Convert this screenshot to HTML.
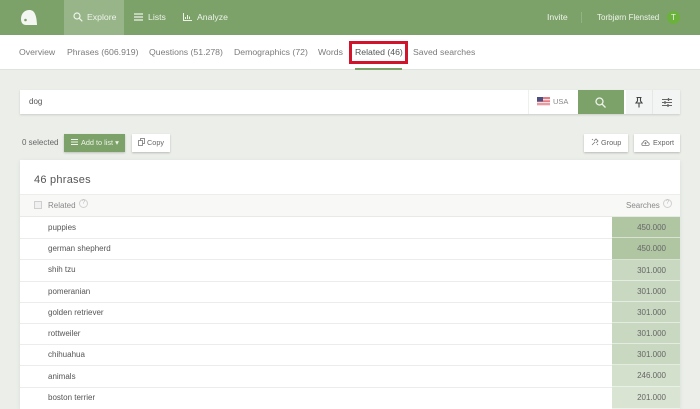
<!DOCTYPE html>
<html>
<head>
<meta charset="utf-8">
<style>
html,body{margin:0;padding:0}
body{width:700px;height:409px;overflow:hidden;background:#ebeee9;font-family:"Liberation Sans",sans-serif;position:relative;color:#555}
.a{position:absolute;white-space:nowrap}
#top{left:0;top:0;width:700px;height:35px;background:#7ca26a}
.n{color:#eef3ea;font-size:8.700px;top:12px;line-height:11px}
#sub{left:0;top:35px;width:700px;height:34px;background:#fff;border-bottom:1px solid #dfe3dd;box-sizing:content-box}
.t{color:#7b7b7b;font-size:8.700px;top:47px;line-height:11px}
.btn{background:#fff;box-shadow:0 1px 2px rgba(0,0,0,.22);height:18px;top:134px;font-size:7.300px;line-height:17px;color:#666;text-align:left;box-sizing:border-box}
.row{left:20px;width:660px;height:21px;border-top:1px solid #ebedea;box-sizing:border-box}
.ph{left:48px;font-size:8px;color:#555;line-height:10px}
.v{left:612px;width:68px;height:20px;line-height:20px;font-size:8px;color:#666;text-align:right;padding-right:14px;box-sizing:border-box;border-bottom:1px solid rgba(255,255,255,.5)}
.q{width:7px;height:7px;border:1px solid #d0d0d0;border-radius:50%;font-size:6px;line-height:7px;text-align:center;color:#bbb}
svg{position:absolute;overflow:visible}
</style>
</head>
<body>
<div class="a" id="top"></div>
<div class="a" style="left:64px;top:0;width:60px;height:35px;background:#97b588"></div>
<svg style="left:20px;top:9px" width="18" height="16" viewBox="0 0 18 16"><path d="M1 10C1 4.500 4.500 1 9.500 1c4.500 0 7 4 7.500 15H6C3 16 1 14 1 10z" fill="#f4f6f2"/><circle cx="5.500" cy="11" r="1.300" fill="#7ca26a"/></svg>
<svg style="left:73px;top:12px" width="10" height="10" viewBox="0 0 10 10" fill="none" stroke="#eef3ea" stroke-width="1.200"><circle cx="4" cy="4" r="3"/><path d="M6.300 6.300L9.300 9.300"/></svg>
<div class="a n" style="left:87px">Explore</div>
<svg style="left:134px;top:13px" width="9" height="8" viewBox="0 0 9 8" fill="none" stroke="#eef3ea" stroke-width="1.200"><path d="M0 1h9M0 4h9M0 7h9"/></svg>
<div class="a n" style="left:148px">Lists</div>
<svg style="left:183px;top:13px" width="9" height="8" viewBox="0 0 9 8" fill="none" stroke="#eef3ea" stroke-width="1"><path d="M.5 0v7.500H9M2.500 6V4M4.500 6V2M6.500 6V3.500"/></svg>
<div class="a n" style="left:197px">Analyze</div>
<div class="a n" style="left:547px">Invite</div>
<div class="a" style="left:581px;top:12px;width:1px;height:11px;background:#93b384"></div>
<div class="a n" style="left:597px;font-size:8px">Torbjørn Flensted</div>
<div class="a" style="left:667px;top:11px;width:13px;height:13px;border-radius:50%;background:#6bb23c;color:#eef3ea;font-size:8px;line-height:13px;text-align:center">T</div>

<div class="a" id="sub"></div>
<div class="a t" style="left:19px">Overview</div>
<div class="a t" style="left:67px">Phrases (606.919)</div>
<div class="a t" style="left:149px">Questions (51.278)</div>
<div class="a t" style="left:234px">Demographics (72)</div>
<div class="a t" style="left:318px">Words</div>
<div class="a t" style="left:355px;color:#555">Related (46)</div>
<div class="a t" style="left:413px">Saved searches</div>
<div class="a" style="left:349px;top:41px;width:59px;height:23px;border:3px solid #d0142c;box-sizing:border-box"></div>
<div class="a" style="left:355px;top:68px;width:47px;height:2px;background:#7ca26a"></div>

<div class="a" style="left:20px;top:90px;width:660px;height:24px;background:#fff;box-shadow:0 1px 2px rgba(0,0,0,.14)"></div>
<div class="a" style="left:29px;top:97px;font-size:8px;line-height:10px;color:#555">dog</div>
<div class="a" style="left:528px;top:90px;width:1px;height:24px;background:#eef0ed"></div>
<svg style="left:537px;top:97px" width="13" height="9" viewBox="0 0 13 9"><rect width="13" height="9" fill="#e67b84"/><rect y="2" width="13" height="1.300" fill="#f5dfe0"/><rect y="5" width="13" height="1.300" fill="#f5dfe0"/><rect y="7.700" width="13" height="1.300" fill="#f5dfe0"/><rect width="6" height="4.500" fill="#4a4f80"/></svg>
<div class="a" style="left:553px;top:97px;font-size:7.500px;line-height:10px;color:#888">USA</div>
<div class="a" style="left:578px;top:90px;width:46px;height:24px;background:#7ca26a"></div>
<svg style="left:595px;top:97px" width="11" height="11" viewBox="0 0 11 11" fill="none" stroke="#eef3ea" stroke-width="1.300"><circle cx="4.500" cy="4.500" r="3.500"/><path d="M7 7l3.500 3.500"/></svg>
<div class="a" style="left:626px;top:90px;width:54px;height:24px;background:#f3f4f4"></div>
<div class="a" style="left:652px;top:90px;width:1px;height:24px;background:#e6e8e5"></div>
<svg style="left:635px;top:97px" width="8" height="11" viewBox="0 0 8 11" fill="none" stroke="#444" stroke-width="1.100"><path d="M1.500 .500h5M2.500 .500V4L1 6h6L5.500 4V.500M4 6v4.500"/></svg>
<svg style="left:662px;top:98px" width="10" height="9" viewBox="0 0 10 9" fill="none" stroke="#666" stroke-width="1"><path d="M0 1.500h10M0 4.500h10M0 7.500h10"/><path d="M6.500 0v3M3 3v3M6 6v3" stroke-width="1.300"/></svg>

<div class="a" style="left:22px;top:138px;font-size:8px;line-height:10px;color:#666">0 selected</div>
<div class="a" style="left:64px;top:134px;width:61px;height:18px;background:#7ca26a;box-shadow:0 1px 2px rgba(0,0,0,.2);color:#eef3ea;font-size:7.300px;line-height:17px;padding-left:17px;box-sizing:border-box">Add to list ▾</div>
<svg style="left:71px;top:139px" width="7" height="6" viewBox="0 0 7 6" fill="none" stroke="#eef3ea" stroke-width="1"><path d="M0 .500h7M0 3h7M0 5.500h7"/></svg>
<div class="a btn" style="left:132px;width:38px;padding-left:15px">Copy</div>
<svg style="left:138px;top:138px" width="7" height="8" viewBox="0 0 7 8" fill="none" stroke="#777" stroke-width=".8"><rect x="2.500" y=".5" width="4" height="5"/><rect x=".5" y="2.500" width="4" height="5" fill="#fff"/></svg>
<div class="a btn" style="left:584px;width:44px;padding-left:17px">Group</div>
<svg style="left:591px;top:138px" width="8" height="8" viewBox="0 0 8 8" fill="none" stroke="#777" stroke-width=".8"><path d="M1 7l3-3M3 3l2-2 2 2-2 2M1 1l1 1M6 6l1 1"/></svg>
<div class="a btn" style="left:634px;width:46px;padding-left:19px">Export</div>
<svg style="left:641px;top:139px" width="9" height="7" viewBox="0 0 9 7" fill="none" stroke="#777" stroke-width=".8"><path d="M2 6.500C.5 6.500 .3 4 2 3.800 2.500 1 6 1 6.700 3.500 8.700 3.800 8.700 6.500 7 6.500zM4.500 5.500V3.500M3.500 4.500l1-1 1 1"/></svg>

<div class="a" style="left:20px;top:160px;width:660px;height:249px;background:#fff;box-shadow:0 1px 4px rgba(0,0,0,.08)"></div>
<div class="a" style="left:34px;top:174px;font-size:11px;line-height:13px;color:#555;letter-spacing:.25px">46 phrases</div>
<div class="a" style="left:20px;top:194px;width:660px;height:23px;background:#f8f9f7;border-top:1px solid #eceee9;border-bottom:1px solid #e8eae6;box-sizing:border-box"></div>
<div class="a" style="left:34px;top:201px;width:6px;height:6px;border:1px solid #cfcfcf;background:#f0f0f0"></div>
<div class="a" style="left:48px;top:201px;font-size:8px;line-height:10px;color:#888">Related</div>
<div class="a q" style="left:79px;top:199px">?</div>
<div class="a" style="left:626px;top:201px;font-size:8px;line-height:10px;color:#888">Searches</div>
<div class="a q" style="left:663px;top:199px">?</div>

<div class="a row" style="top:238px"></div>
<div class="a row" style="top:259px"></div>
<div class="a row" style="top:281px"></div>
<div class="a row" style="top:302px"></div>
<div class="a row" style="top:323px"></div>
<div class="a row" style="top:344px"></div>
<div class="a row" style="top:365px"></div>
<div class="a row" style="top:387px"></div>

<div class="a ph" style="top:223px">puppies</div>
<div class="a ph" style="top:244px">german shepherd</div>
<div class="a ph" style="top:265px">shih tzu</div>
<div class="a ph" style="top:287px">pomeranian</div>
<div class="a ph" style="top:308px">golden retriever</div>
<div class="a ph" style="top:329px">rottweiler</div>
<div class="a ph" style="top:350px">chihuahua</div>
<div class="a ph" style="top:372px">animals</div>
<div class="a ph" style="top:393px">boston terrier</div>

<div class="a v" style="top:217px;height:21px;line-height:21px;background:#b0c6a3">450.000</div>
<div class="a v" style="top:238px;height:22px;line-height:21px;background:#b0c6a3">450.000</div>
<div class="a v" style="top:260px;height:21px;line-height:21px;background:#c9d8c0">301.000</div>
<div class="a v" style="top:281px;height:21px;line-height:21px;background:#c9d8c0">301.000</div>
<div class="a v" style="top:302px;height:21px;line-height:21px;background:#c9d8c0">301.000</div>
<div class="a v" style="top:323px;height:21px;line-height:21px;background:#c9d8c0">301.000</div>
<div class="a v" style="top:344px;height:21px;line-height:21px;background:#c9d8c0">301.000</div>
<div class="a v" style="top:365px;height:22px;line-height:21px;background:#d3e0cb">246.000</div>
<div class="a v" style="top:387px;height:22px;line-height:21px;background:#d9e4d2">201.000</div>
</body>
</html>
